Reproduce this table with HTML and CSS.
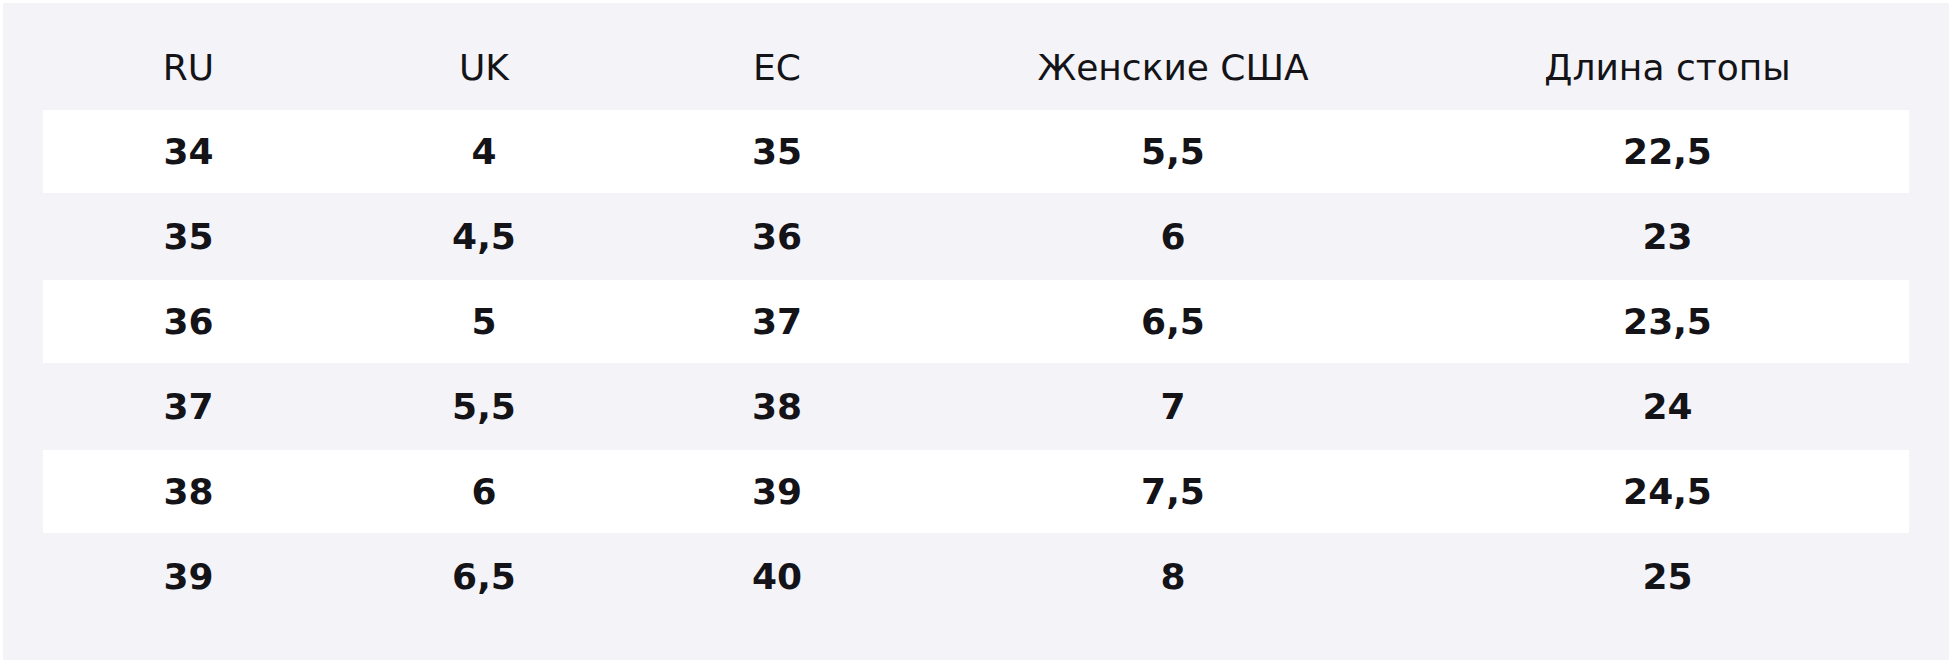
FILE: index.html
```html
<!DOCTYPE html>
<html lang="ru">
<head>
<meta charset="utf-8">
<title>Таблица размеров</title>
<link rel="stylesheet" href="styles.css">
</head>
<body>
<div class="sizes">
  <table class="size-table">
    <colgroup>
      <col class="c1"><col class="c2"><col class="c3"><col class="c4"><col class="c5">
    </colgroup>
    <thead>
      <tr><th>RU</th><th>UK</th><th>EC</th><th>Женские США</th><th>Длина стопы</th></tr>
    </thead>
    <tbody>
      <tr><td>34</td><td>4</td><td>35</td><td>5,5</td><td>22,5</td></tr>
      <tr><td>35</td><td>4,5</td><td>36</td><td>6</td><td>23</td></tr>
      <tr><td>36</td><td>5</td><td>37</td><td>6,5</td><td>23,5</td></tr>
      <tr><td>37</td><td>5,5</td><td>38</td><td>7</td><td>24</td></tr>
      <tr><td>38</td><td>6</td><td>39</td><td>7,5</td><td>24,5</td></tr>
      <tr><td>39</td><td>6,5</td><td>40</td><td>8</td><td>25</td></tr>
    </tbody>
  </table>
</div>
</body>
</html>
```

FILE: styles.css
```css
html, body {
  margin: 0;
  padding: 0;
  background: #ffffff;
}
body {
  padding: 3px;
  font-family: "DejaVu Sans", sans-serif;
  color: #131318;
}
.sizes {
  background: #f4f4f8;
  padding: 40px;
  height: 657px;
  box-sizing: border-box;
}
.size-table {
  width: 1866px;
  border-collapse: collapse;
  table-layout: fixed;
}
.c1 { width: 291px; }
.c2 { width: 300px; }
.c3 { width: 286px; }
.c4 { width: 506px; }
.c5 { width: 483px; }
.size-table th {
  font-weight: normal;
  font-size: 36px;
  line-height: 49px;
  padding: 0 0 18px 0;
  text-align: center;
  vertical-align: top;
}
.size-table td {
  font-weight: bold;
  font-size: 36px;
  text-align: center;
  padding: 0;
  height: 87px;
  line-height: 87px;
}
.size-table tbody tr:nth-child(odd) td {
  background: #ffffff;
  height: 83px;
  line-height: 83px;
}
```
